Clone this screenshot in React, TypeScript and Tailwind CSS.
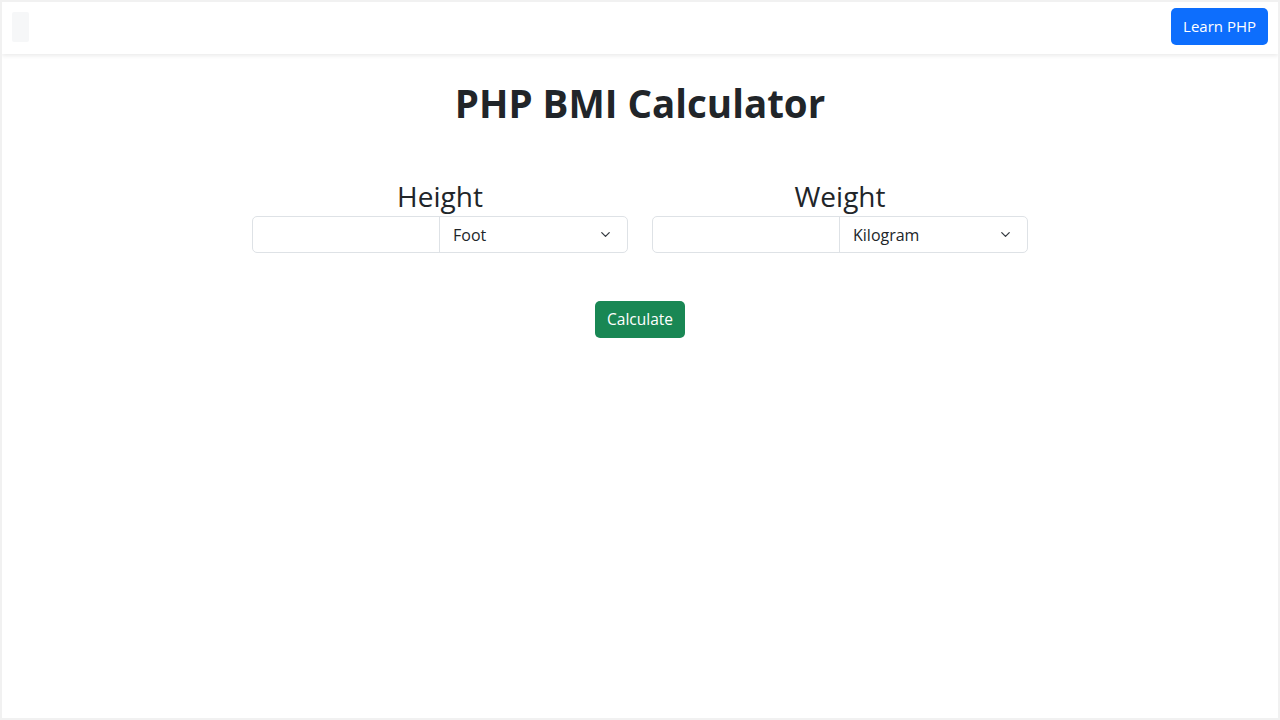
import { ChevronDown } from "lucide-react";

const font = { fontFamily: '"Open Sans", "Noto Sans", sans-serif' };

type FieldProps = {
  label: string;
  unit: string;
};

const Field = ({ label, unit }: FieldProps) => (
  <div className="w-[376px] flex flex-col items-center">
    <div className="text-[28px] leading-[36px] text-[#212529] font-normal">{label}</div>
    <div className="mt-[2px] w-full h-[37px] flex rounded-[5px] border border-[#dee2e6] bg-white">
      <input
        type="text"
        className="w-[187px] h-full px-3 outline-none bg-transparent border-r border-[#dee2e6] text-[16px]"
      />
      <div className="flex-1 flex items-center justify-between pl-[13px] pr-[14px] text-[16px] text-[#212529]">
        <span>{unit}</span>
        <ChevronDown className="w-[15px] h-[15px] text-[#343a40]" strokeWidth={2} />
      </div>
    </div>
  </div>
);

export default function App() {
  return (
    <div className="w-[1280px] h-[720px] bg-white border-2 border-[#f1f1f1] overflow-hidden" style={font}>
      {/* Navbar */}
      <div className="h-[52px] flex items-start justify-between pt-[6px] pl-[10px] pr-[10px] bg-white shadow-[0_2px_4px_rgba(0,0,0,0.08)]">
        <div className="mt-[4px] w-[17px] h-[30px] bg-[#f6f7f8] rounded-[2px]" />
        <button className="h-[37px] px-[12px] rounded-[5px] bg-[#0d6efd] text-white text-[15px]">
          Learn PHP
        </button>
      </div>

      {/* Title */}
      <h1 className="mt-[25px] text-center text-[38.5px] leading-[48px] font-bold text-[#212529]">
        PHP BMI Calculator
      </h1>

      {/* Fields */}
      <div className="mt-[51px] flex justify-center gap-6">
        <Field label="Height" unit="Foot" />
        <Field label="Weight" unit="Kilogram" />
      </div>

      {/* Action */}
      <div className="mt-[48px] flex justify-center">
        <button className="h-[37px] px-[12px] rounded-[5px] bg-[#198754] text-white text-[15.5px]">
          Calculate
        </button>
      </div>
    </div>
  );
}
